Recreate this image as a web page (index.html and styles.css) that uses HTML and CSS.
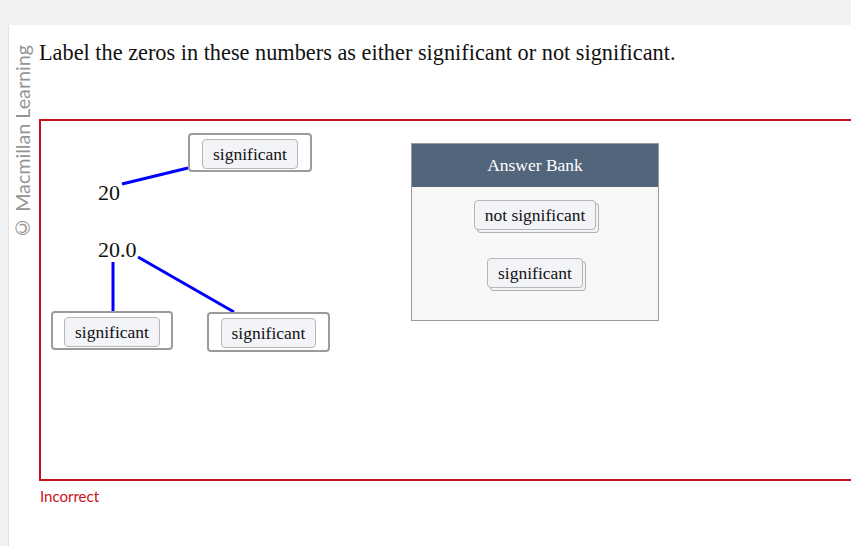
FILE: index.html
```html
<!DOCTYPE html>
<html lang="en">
<head>
<meta charset="utf-8">
<title>Label the zeros</title>
<link rel="stylesheet" href="styles.css">
</head>
<body>
<div class="page">
  <div class="panel">
    <div class="side"><span class="copyright">© Macmillan Learning</span></div>
    <div class="content">
      <p class="prompt">Label the zeros in these numbers as either significant or not significant.</p>
      <div class="canvas">
        <div class="diagram">
          <svg class="lines" width="370" height="357" viewBox="0 0 370 357">
            <line x1="81" y1="63" x2="147" y2="47"/>
            <line x1="72" y1="141" x2="72" y2="191"/>
            <line x1="97" y1="136" x2="193" y2="191"/>
          </svg>
          <div class="num num-a">20</div>
          <div class="num num-b">20.0</div>
          <div class="zone zone-a"><span class="chip">significant</span></div>
          <div class="zone zone-b"><span class="chip">significant</span></div>
          <div class="zone zone-c"><span class="chip">significant</span></div>
        </div>
        <div class="bank">
          <div class="bank-head">Answer Bank</div>
          <div class="bank-body">
            <span class="chip stacked">not significant</span>
            <span class="chip stacked">significant</span>
          </div>
        </div>
      </div>
      <div class="status">Incorrect</div>
    </div>
  </div>
</div>
</body>
</html>
```
FILE: styles.css
```css
html, body {
  margin: 0;
  padding: 0;
  background: #f2f2f2;
}
.page {
  padding: 25px 0 0 8px;
  height: 521px;
  overflow: hidden;
}
.panel {
  background: #fff;
  border-left: 1px solid #e2e2e2;
  height: 100%;
  display: flex;
}
.side {
  width: 30px;
  flex: none;
  padding-top: 20px;
  display: flex;
  justify-content: center;
  align-items: flex-start;
}
.copyright {
  writing-mode: vertical-rl;
  transform: rotate(180deg);
  font-family: Lato, "Liberation Sans", sans-serif;
  font-size: 19.7px;
  line-height: 1;
  color: #959595;
  white-space: nowrap;
  margin-left: -3px;
}
.content {
  flex: 1;
  min-width: 0;
}
.prompt {
  margin: 15px 0 0 0;
  font-family: "Liberation Serif", "Times New Roman", serif;
  font-size: 22.3px;
  color: #111;
  white-space: nowrap;
}
.canvas {
  margin-top: 53px;
  border: 2px solid #cc1122;
  border-right: none;
  height: 358px;
  display: flex;
  align-items: flex-start;
}
.diagram {
  position: relative;
  width: 370px;
  height: 357px;
  flex: none;
}
.lines {
  position: absolute;
  left: 0;
  top: 0;
}
.lines line {
  stroke: #0000ff;
  stroke-width: 3;
}
.num {
  position: absolute;
  font-family: "Liberation Serif", "Times New Roman", serif;
  font-size: 22px;
  color: #111;
}
.num-a { left: 57px; top: 59px; }
.num-b { left: 57px; top: 116px; }
.zone {
  position: absolute;
  box-sizing: border-box;
  height: 39px;
  border: 2px solid #9b9b9b;
  border-radius: 4px;
  background: #fff;
  padding-top: 2px;
  display: flex;
  justify-content: center;
  align-items: center;
}
.zone-a { left: 147px; top: 12px; width: 124px; }
.zone-b { left: 10px; top: 190px; width: 122px; }
.zone-c { left: 166px; top: 191px; width: 123px; height: 40px; }
.chip {
  display: inline-block;
  box-sizing: border-box;
  height: 30px;
  line-height: 28px;
  padding: 0 10px;
  background: #f3f4f8;
  border: 1px solid #b7b7b7;
  border-radius: 4px;
  font-family: "Liberation Serif", "Times New Roman", serif;
  font-size: 17.5px;
  color: #111;
  white-space: nowrap;
}
.chip.stacked {
  box-shadow: 3px 3px 0 -1px #f3f4f8, 3px 3px 0 0 #b0b0b0;
}
.bank {
  margin-top: 22px;
  width: 248px;
  box-sizing: border-box;
  border: 1px solid #9a9a9a;
  background: #f8f8f8;
}
.bank-head {
  height: 43px;
  background: #52657b;
  color: #fff;
  font-family: "Liberation Serif", "Times New Roman", serif;
  font-size: 17.5px;
  display: flex;
  align-items: center;
  justify-content: center;
}
.bank-body {
  padding: 13px 0 32px;
  display: flex;
  flex-direction: column;
  align-items: center;
  gap: 28px;
}
.status {
  margin-top: 6px;
  margin-left: 1px;
  font-family: Lato, "Liberation Sans", sans-serif;
  font-size: 15px;
  color: #cc1122;
}
```
